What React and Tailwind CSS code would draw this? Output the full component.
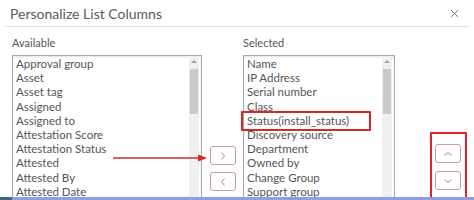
import React from "react";

const available = [
  "Approval group",
  "Asset",
  "Asset tag",
  "Assigned",
  "Assigned to",
  "Attestation Score",
  "Attestation Status",
  "Attested",
  "Attested By",
  "Attested Date",
];

const selected = [
  "Name",
  "IP Address",
  "Serial number",
  "Class",
  "Status(install_status)",
  "Discovery source",
  "Department",
  "Owned by",
  "Change Group",
  "Support group",
];

function ListBox({ items, width }) {
  return (
    <div
      className={`flex h-[150px] border border-[#a9a9a9] bg-white shadow-[inset_0_1px_2px_rgba(0,0,0,0.12)] ${width}`}
    >
      <div className="flex-1 overflow-hidden pl-[3px] pt-[1px]">
        {items.map((item) => (
          <div key={item} className="h-[14.2px] text-[11.5px] leading-[14.2px] text-[#555] whitespace-nowrap">
            {item}
          </div>
        ))}
      </div>
      {/* scrollbar */}
      <div className="mr-[2px] flex w-[10px] flex-col items-center bg-[#f0f0f0]">
        <div className="mt-[4px] h-0 w-0 border-x-[3px] border-b-[3px] border-x-transparent border-b-[#a0a0a0]" />
        <div className="mt-[6px] h-[45px] w-[8px] bg-[#c9c9c9]" />
      </div>
    </div>
  );
}

function MoveButton({ children }) {
  return (
    <button className="flex h-[19px] w-[26px] items-center justify-center rounded-[3px] border border-[#d09a9a] bg-white text-[#b88080]">
      {children}
    </button>
  );
}

function Chevron({ d }) {
  return (
    <svg width="10" height="10" viewBox="0 0 10 10" fill="none" stroke="currentColor" strokeWidth="1">
      <path d={d} />
    </svg>
  );
}

export default function App() {
  return (
    <div className="relative h-[200px] w-[474px] overflow-hidden bg-white font-['Lato','Open_Sans',sans-serif]">
      {/* Header */}
      <div className="mx-[5px] flex h-[27px] items-center justify-between border-b border-[#e2e2e2] pl-[5px] pr-[10px]">
        <h2 className="text-[14px] text-[#5a5a5a]">Personalize List Columns</h2>
        <svg width="9" height="9" viewBox="0 0 10 10" stroke="#777" strokeWidth="1.1">
          <path d="M1 1 L9 9 M9 1 L1 9" />
        </svg>
      </div>

      {/* Body */}
      <div className="flex pl-[12px] pt-[9px]">
        <div className="flex flex-col">
          <div className="h-[14px] text-[11px] leading-[14px] text-[#555]">Available</div>
          <div className="mt-[5px]">
            <ListBox items={available} width="w-[190px]" />
          </div>
        </div>

        <div className="ml-[8px] flex w-[26px] flex-col gap-[7px] pt-[110px]">
          <MoveButton>
            <Chevron d="M3.5 1.5 L6.5 5 L3.5 8.5" />
          </MoveButton>
          <MoveButton>
            <Chevron d="M6.5 1.5 L3.5 5 L6.5 8.5" />
          </MoveButton>
        </div>

        <div className="ml-[7px] flex flex-col">
          <div className="h-[14px] text-[11px] leading-[14px] text-[#555]">Selected</div>
          <div className="mt-[5px]">
            <ListBox items={selected} width="w-[152px]" />
          </div>
        </div>

        <div className="ml-[40px] flex w-[26px] flex-col gap-[8px] pt-[108px]">
          <MoveButton>
            <Chevron d="M1.5 6.5 L5 3.5 L8.5 6.5" />
          </MoveButton>
          <MoveButton>
            <Chevron d="M1.5 3.5 L5 6.5 L8.5 3.5" />
          </MoveButton>
        </div>
      </div>

      {/* annotations */}
      <div className="absolute left-[241px] top-[111px] h-[20px] w-[130px] rounded-[1px] border-2 border-[#d9262b]" />
      <div className="absolute left-[430px] top-[132px] h-[70px] w-[37px] border-2 border-[#e0242a]" />
      <svg className="absolute left-[110px] top-[152px]" width="100" height="12" viewBox="0 0 100 12">
        <path d="M3 6 L90 6" stroke="#d8282b" strokeWidth="1.6" />
        <path d="M88 2.5 L97 6 L88 9.5 Z" fill="#d8282b" />
      </svg>

      {/* bottom strip */}
      <div className="absolute bottom-0 left-0 flex h-[3px] w-full">
        <div className="w-[12px] bg-[#3d6a78]" />
        <div className="flex-1 bg-[#8d9de6]" />
      </div>
    </div>
  );
}
